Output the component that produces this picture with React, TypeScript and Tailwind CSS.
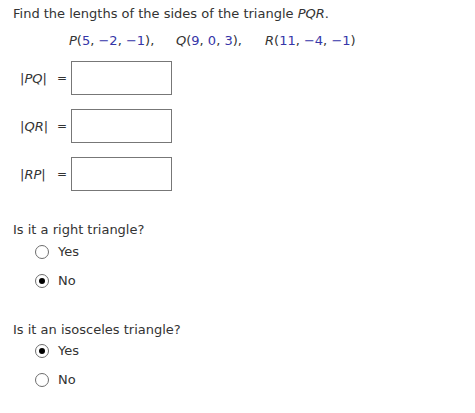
import React from "react";

const font = { fontFamily: '"DejaVu Sans", Verdana, sans-serif' };

function Radio({ checked, label }: { checked?: boolean; label: string }) {
  return (
    <div className="flex items-center h-[29px] pl-[22px]">
      <span className="w-[14px] h-[14px] rounded-full border border-[#6d6d6d] flex items-center justify-center bg-white">
        {checked && <span className="w-[6px] h-[6px] rounded-full bg-black" />}
      </span>
      <span className="ml-[9px]">{label}</span>
    </div>
  );
}

function LengthRow({ a, b }: { a: string; b: string }) {
  return (
    <div className="flex items-center h-[34px]">
      <span className="w-[44px] pl-[7px]">
        |<i>{a}</i><i>{b}</i>|
      </span>
      <span className="w-[14px] text-[12px]">=</span>
      <span className="w-[101px] h-[34px] border border-[#777] bg-white" />
    </div>
  );
}

const blue = "text-[#3535a8]";

export default function App() {
  return (
    <div className="w-[475px] h-[413px] bg-white text-[13px] text-[#333] leading-none pl-[13px]" style={font}>
      <div className="pt-[7px] h-[34px]">
        Find the lengths of the sides of the triangle <i>PQR</i>.
      </div>
      <div className="pl-[56px] flex">
        <span className="w-[107px]">
          <i>P</i>(<span className={blue}>5</span>, <span className={blue}>−2</span>, <span className={blue}>−1</span>),
        </span>
        <span className="w-[89px]">
          <i>Q</i>(<span className={blue}>9</span>, <span className={blue}>0</span>, <span className={blue}>3</span>),
        </span>
        <span>
          <i>R</i>(<span className={blue}>11</span>, <span className={blue}>−4</span>, <span className={blue}>−1</span>)
        </span>
      </div>
      <div className="mt-[14px] flex flex-col gap-[14px]">
        <LengthRow a="P" b="Q" />
        <LengthRow a="Q" b="R" />
        <LengthRow a="R" b="P" />
      </div>
      <div className="mt-[32px]">Is it a right triangle?</div>
      <div className="mt-[1px]">
        <Radio label="Yes" />
        <Radio checked label="No" />
      </div>
      <div className="mt-[28px]">Is it an isosceles triangle?</div>
      <div>
        <Radio checked label="Yes" />
        <Radio label="No" />
      </div>
    </div>
  );
}
